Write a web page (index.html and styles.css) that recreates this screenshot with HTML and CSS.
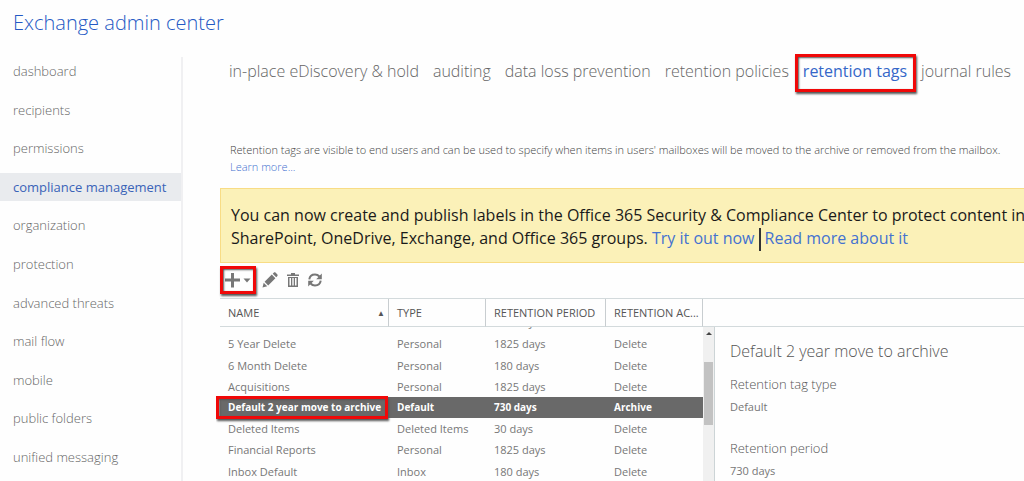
FILE: index.html
```html
<!DOCTYPE html>
<html lang="en">
<head>
    <meta charset="UTF-8">
    <meta name="viewport" content="width=device-width, initial-scale=1.0">
    <title>Exchange admin center</title>
    <link rel="stylesheet" href="styles.css">
</head>
<body>
    <header class="top">
        <h1>Exchange admin center</h1>
    </header>

    <div class="layout">
        <nav class="sidebar">
            <a href="#">dashboard</a>
            <a href="#">recipients</a>
            <a href="#">permissions</a>
            <a href="#" class="current">compliance management</a>
            <a href="#">organization</a>
            <a href="#">protection</a>
            <a href="#">advanced threats</a>
            <a href="#">mail flow</a>
            <a href="#">mobile</a>
            <a href="#">public folders</a>
            <a href="#">unified messaging</a>
        </nav>

        <main class="content">
            <nav class="tabs">
                <a href="#">in-place eDiscovery &amp; hold</a>
                <a href="#">auditing</a>
                <a href="#">data loss prevention</a>
                <a href="#">retention policies</a>
                <a href="#" class="current marked">retention tags</a>
                <a href="#">journal rules</a>
            </nav>

            <p class="intro">Retention tags are visible to end users and can be used to specify when items in users' mailboxes will be moved to the archive or removed from the mailbox.<br>
            <a href="#">Learn more...</a></p>

            <div class="banner">
                <p>You can now create and publish labels in the Office 365 Security &amp; Compliance Center to protect content in<br>
                SharePoint, OneDrive, Exchange, and Office 365 groups. <a href="#">Try it out now</a><span class="divider"></span><a href="#">Read more about it</a></p>
            </div>

            <div class="toolbar">
                <button type="button" class="add marked" aria-label="New">
                    <svg width="28" height="16" viewBox="0 0 28 16"><path d="M6 1h3v5.500h6v3H9v6H6v-6H0v-3h6z"/><path d="M18.500 6.500h7L22 10.500z"/></svg>
                </button>
                <button type="button" aria-label="Edit">
                    <svg width="16" height="16" viewBox="0 0 16 16"><path d="M0.500 15.500l1.200-4.700 3.500 3.500zM2.600 9.800l7.200-7.200 3.600 3.600-7.200 7.200zM10.700 1.800l1-1c.6-.6 1.400-.6 2 0l1.500 1.500c.6.6.6 1.400 0 2l-1 1z"/></svg>
                </button>
                <button type="button" aria-label="Delete">
                    <svg width="12" height="14" viewBox="0 0 12 14"><path d="M4 0h4v1.500h4V3H0V1.500h4z"/><path fill-rule="evenodd" d="M1 4h10v10H1zM2.500 5v7.500h1.500v-7.500zM5.300 5v7.500h1.400v-7.500zM8 5v7.500h1.500v-7.500z"/></svg>
                </button>
                <button type="button" aria-label="Refresh">
                    <svg width="14" height="14" viewBox="0 0 14 14"><path class="stroke" d="M1.300 6.300C1.700 3.300 4 1.500 7 1.500c1.900 0 3.300.7 4.400 2M12.700 7.700c-.4 3-2.700 4.800-5.700 4.800-1.900 0-3.300-.7-4.400-2"/><path d="M13.800.6v5.600H8.200zM.2 13.400V7.800h5.600z"/></svg>
                </button>
            </div>

            <table class="grid grid-head">
                <thead>
                    <tr>
                        <th class="name">NAME <span class="sort">▲</span></th>
                        <th class="type">TYPE</th>
                        <th class="period">RETENTION PERIOD</th>
                        <th class="action">RETENTION AC...</th>
                        <th class="rest"></th>
                    </tr>
                </thead>
            </table>

            <div class="panes">
                <div class="list">
                    <table class="grid grid-rows">
                        <tbody>
                            <tr><td class="name"></td><td class="type"></td><td class="period">365 days</td><td class="action"></td></tr>
                            <tr><td>5 Year Delete</td><td>Personal</td><td>1825 days</td><td>Delete</td></tr>
                            <tr><td>6 Month Delete</td><td>Personal</td><td>180 days</td><td>Delete</td></tr>
                            <tr><td>Acquisitions</td><td>Personal</td><td>1825 days</td><td>Delete</td></tr>
                            <tr class="selected"><td class="marked">Default 2 year move to archive</td><td>Default</td><td>730 days</td><td>Archive</td></tr>
                            <tr><td>Deleted Items</td><td>Deleted Items</td><td>30 days</td><td>Delete</td></tr>
                            <tr><td>Financial Reports</td><td>Personal</td><td>1825 days</td><td>Delete</td></tr>
                            <tr><td>Inbox Default</td><td>Inbox</td><td>180 days</td><td>Delete</td></tr>
                        </tbody>
                    </table>
                </div>
                <div class="scrollbar">
                    <svg width="6" height="3" viewBox="0 0 6 3"><path d="M3 0l3 3H0z"/></svg>
                    <div class="thumb"></div>
                </div>
                <section class="details">
                    <h2>Default 2 year move to archive</h2>
                    <h3>Retention tag type</h3>
                    <p>Default</p>
                    <h3>Retention period</h3>
                    <p>730 days</p>
                </section>
            </div>
        </main>
    </div>
</body>
</html>
```
FILE: styles.css
```css
* {
    box-sizing: border-box;
}
body {
    margin: 0;
    height: 100vh;
    display: flex;
    flex-direction: column;
    overflow: hidden;
    background: #fefefe;
    color: #777;
    font-family: "Open Sans", "Noto Sans", sans-serif;
    font-size: 11px;
}
h1, h2, h3, p {
    margin: 0;
    font-weight: 300;
}
a {
    color: #4472d0;
    text-decoration: none;
}
.top {
    flex: none;
    height: 57px;
    padding: 8px 13px;
}
.top h1 {
    color: #2459c4;
    font-size: 20px;
    line-height: 30px;
}
.layout {
    flex: 1;
    display: flex;
    min-height: 0;
}

/* left navigation */
.sidebar {
    flex: none;
    width: 183px;
    display: flex;
    flex-direction: column;
    justify-content: space-between;
    padding-bottom: 10px;
    border-right: 2px solid #f0f0f2;
}
.sidebar a {
    padding-left: 13px;
    color: #666;
    font-size: 13px;
    font-weight: 300;
    line-height: 28px;
    white-space: nowrap;
}
.sidebar a.current {
    background: #e9ebee;
    color: #3a63b8;
    font-weight: 400;
}

/* right side */
.content {
    flex: 1;
    min-width: 0;
    display: flex;
    flex-direction: column;
    padding-left: 37px;
}
.tabs {
    display: flex;
    gap: 14px;
    padding-left: 9px;
    white-space: nowrap;
}
.tabs a {
    color: #666;
    font-size: 16px;
    font-weight: 300;
    line-height: 28px;
}
.tabs a.current {
    color: #3567c8;
    font-weight: 400;
}
.intro {
    padding: 56px 0 13px 10px;
    color: #444;
    line-height: 17px;
    white-space: nowrap;
}
.banner {
    padding: 15px 10px 11px;
    border: 1px solid #f8dc85;
    border-right: 0;
    background: #fbf1b8;
    color: #1a1a1a;
    font-size: 16px;
    line-height: 23px;
    white-space: nowrap;
    overflow: hidden;
}
.banner p {
    font-weight: 400;
}
.divider {
    display: inline-block;
    width: 2px;
    height: 23px;
    margin: 0 4px;
    background: #333;
    vertical-align: middle;
}

/* red highlight frames */
.marked {
    position: relative;
}
.marked::after {
    content: "";
    position: absolute;
    inset: -3px -9px -7px -8px;
    border: 3px solid #f00808;
    box-shadow: 1px 2px 2px #555, inset 1px 1px 2px #555;
}
.toolbar .marked::after {
    inset: -6px -3px -6px -5px;
}
.grid .marked::after {
    inset: -1px 1px -1px -4px;
}

.toolbar {
    display: flex;
    align-items: center;
    gap: 9px;
    height: 35px;
    padding: 0 0 2px 5px;
}
.toolbar button {
    display: flex;
    padding: 0;
    border: 0;
    background: none;
}
.toolbar svg {
    fill: #777;
}
.toolbar .stroke {
    fill: none;
    stroke: #777;
    stroke-width: 2;
}

/* tag list */
.grid {
    width: 100%;
    table-layout: fixed;
    border-collapse: separate;
    border-spacing: 0;
}
.grid th, .grid td {
    padding: 0 0 0 8px;
    text-align: left;
    white-space: nowrap;
}
.grid .name {
    width: 169px;
}
.grid .type {
    width: 97px;
}
.grid .period {
    width: 120px;
}
.grid .action {
    width: 97px;
}
.grid-head {
    flex: none;
    border-top: 1px solid #d3dadc;
}
.grid-head th {
    height: 28px;
    border-right: 1px solid #c8cdd0;
    border-bottom: 1px solid #d3dadc;
    color: #555;
    font-weight: 400;
}
.grid-head .rest {
    border-right: 0;
}
.sort {
    float: right;
    margin-right: 3px;
    font-size: 8px;
    line-height: 16px;
}
.panes {
    flex: 1;
    display: flex;
    min-height: 0;
}
/* 4px wider on the left so the frame on the selected row is not clipped */
.list {
    flex: none;
    width: 487px;
    margin-left: -4px;
    padding-left: 4px;
    overflow: hidden;
}
/* scrolled down, the first row is partly under the header */
.grid-rows {
    height: 171px;
    margin-top: -16px;
}
.grid-rows .selected td {
    background: #696969;
    color: #fff;
    font-size: 10px;
    font-weight: 700;
}
.scrollbar {
    flex: none;
    width: 11px;
    display: flex;
    flex-direction: column;
    align-items: center;
    gap: 27px;
    padding: 5px 1px 0;
    background: #f0f0f0;
}
.scrollbar svg {
    flex: none;
    fill: #444;
}
.thumb {
    width: 100%;
    height: 63px;
    background: #c2c2c2;
}
.details {
    flex: 1;
    padding: 10px 0 0 15px;
    border-left: 1px solid #ccd4d6;
    color: #555;
}
.details h2 {
    padding-bottom: 8px;
    font-size: 16px;
    line-height: 28px;
}
.details h3 {
    font-size: 13px;
    line-height: 22px;
}
.details p {
    padding-bottom: 18px;
    color: #777;
    font-weight: 400;
    line-height: 24px;
}
```
